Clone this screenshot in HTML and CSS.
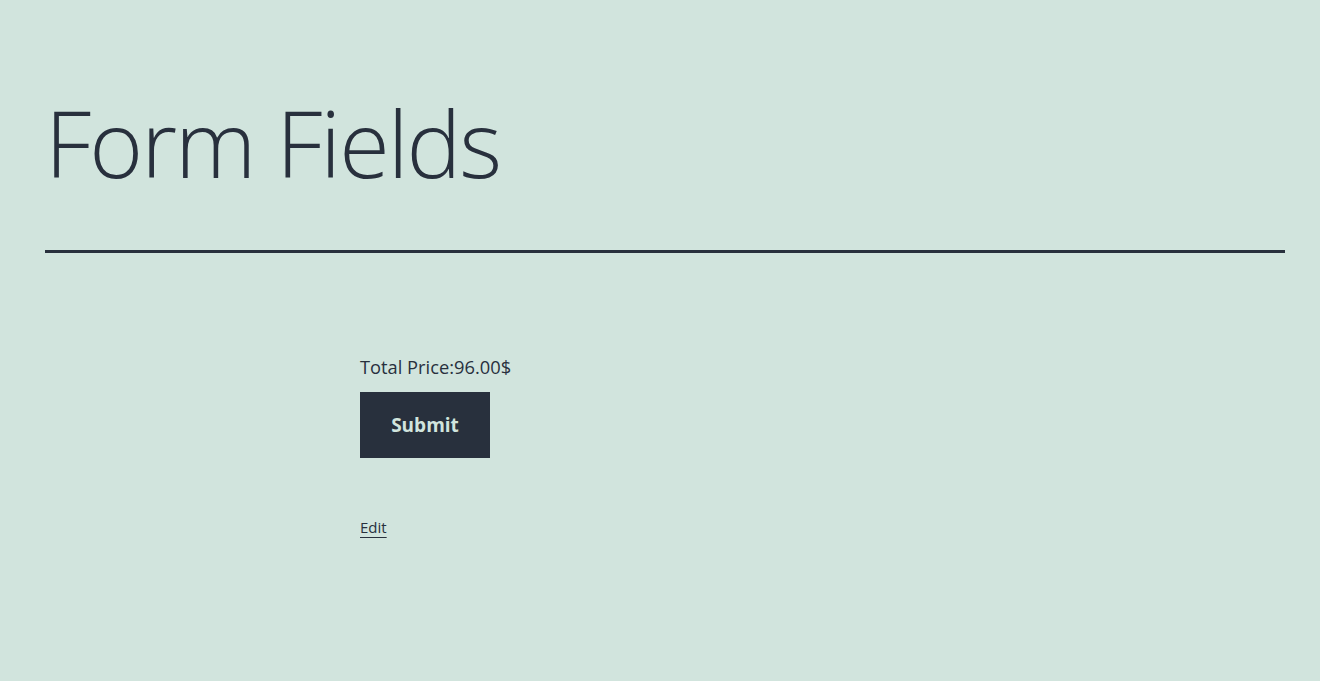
FILE: index.html
```
<!DOCTYPE html>
<html lang="en">
<head>
<meta charset="utf-8">
<title>Form Fields</title>
<link rel="stylesheet" href="styles.css">
</head>
<body>
<main class="site-main">
  <header class="entry-header">
    <h1 class="entry-title">Form Fields</h1>
  </header>
  <div class="entry-content">
    <form class="price-form">
      <p class="total">Total Price:96.00$</p>
      <button type="button" class="submit-btn">Submit</button>
    </form>
    <div class="entry-footer">
      <a href="#" class="edit-link">Edit</a>
    </div>
  </div>
</main>
</body>
</html>
```
FILE: styles.css
```
html, body {
  margin: 0;
  padding: 0;
}
body {
  background: #d1e4dd;
  color: #28303d;
  font-family: "Open Sans", "Noto Sans", sans-serif;
  font-size: 20px;
  line-height: 1.5;
}
.site-main {
  padding: 0 35px 0 45px;
}
.entry-header {
  padding-top: 92px;
  padding-bottom: 57px;
  border-bottom: 3px solid #28303d;
}
.entry-title {
  margin: 0;
  font-size: 92px;
  font-weight: 300;
  line-height: 1.1;
  letter-spacing: -2px;
}
.entry-content {
  padding-left: 315px;
  padding-top: 101px;
}
.price-form {
  display: flex;
  flex-direction: column;
  align-items: flex-start;
}
.total {
  margin: 0 0 12px;
  font-size: 18.3px;
  line-height: 1.4;
}
.submit-btn {
  width: 130px;
  height: 66px;
  border: none;
  background: #28303d;
  color: #d1e4dd;
  font-family: inherit;
  font-size: 19px;
  font-weight: 700;
  cursor: pointer;
}
.entry-footer {
  margin-top: 53px;
}
.edit-link {
  color: #28303d;
  font-size: 15px;
  text-decoration: underline;
  text-underline-offset: 4px;
  text-decoration-thickness: 1px;
}
```
